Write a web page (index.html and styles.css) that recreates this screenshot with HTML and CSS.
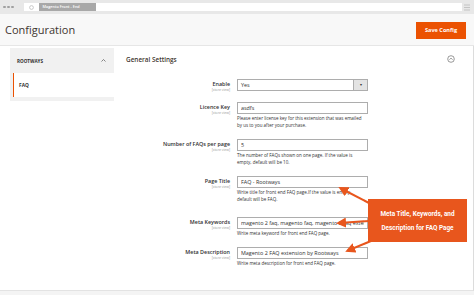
FILE: index.html
```html
<!DOCTYPE html>
<html lang="en">
<head>
    <meta charset="UTF-8">
    <title>Configuration</title>
    <link rel="stylesheet" href="styles.css">
</head>
<body>
    <div class="browser-bar">
        <span class="dots"><i></i><i></i><i></i></span>
        <span class="reload"><svg width="5" height="5" viewBox="0 0 10 10"><circle cx="5" cy="5" r="3.8" fill="none" stroke="#b5b5b5" stroke-width="1.4"/></svg></span>
        <span class="tab">Magento Front - End</span>
        <span class="address"></span>
        <span class="menu"><svg width="6" height="7" viewBox="0 0 6 7"><path d="M0 1h6M0 3.5h6M0 6h6" stroke="#c4c4c4" stroke-width="1"/></svg></span>
    </div>

    <header class="page-header">
        <h1>Configuration</h1>
        <button class="save-btn">Save Config</button>
    </header>

    <main class="layout">
        <aside class="sidebar">
            <div class="sidebar-head">
                <span>ROOTWAYS</span>
                <svg width="5" height="3" viewBox="0 0 10 6"><path d="M1 5l4-4 4 4" fill="none" stroke="#555" stroke-width="1.4"/></svg>
            </div>
            <div class="sidebar-item">FAQ</div>
        </aside>

        <section class="content">
            <div class="section-head">
                <h2>General Settings</h2>
                <svg width="8" height="8" viewBox="0 0 16 16"><circle cx="8" cy="8" r="6.6" fill="none" stroke="#555" stroke-width="1.2"/><path d="M5 9.3l3-3 3 3" fill="none" stroke="#555" stroke-width="1.3"/></svg>
            </div>

            <div class="form">
                <div class="row">
                    <div class="label">Enable<small>[store view]</small></div>
                    <div class="field">
                        <div class="input select">Yes<span class="select-btn">▾</span></div>
                    </div>
                </div>
                <div class="row">
                    <div class="label">Licence Key<small>[store view]</small></div>
                    <div class="field">
                        <input class="input" type="text" value="asdfs">
                        <p class="note">Please enter license key for this extension that was emailed by us to you after your purchase.</p>
                    </div>
                </div>
                <div class="row">
                    <div class="label">Number of FAQs per page<small>[store view]</small></div>
                    <div class="field">
                        <input class="input" type="text" value="5">
                        <p class="note">The number of FAQs shown on one page. If the value is empty, default will be 10.</p>
                    </div>
                </div>
                <div class="row">
                    <div class="label">Page Title<small>[store view]</small></div>
                    <div class="field">
                        <input class="input" type="text" value="FAQ - Rootways">
                        <p class="note">Write title for front end FAQ page.If the value is empty default will be FAQ.</p>
                    </div>
                </div>
                <div class="row row-spaced">
                    <div class="label">Meta Keywords<small>[store view]</small></div>
                    <div class="field">
                        <input class="input" type="text" value="magento 2 faq, magento faq, magento 2 faq extension">
                        <p class="note">Write meta keyword for front end FAQ page.</p>
                    </div>
                </div>
                <div class="row">
                    <div class="label">Meta Description<small>[store view]</small></div>
                    <div class="field">
                        <input class="input" type="text" value="Magento 2 FAQ extension by Rootways">
                        <p class="note">Write meta description for front end FAQ page.</p>
                    </div>
                </div>
            </div>
        </section>
    </main>

    <div class="callout">Meta Title, Keywords, and<br>Description for FAQ Page</div>

    <svg class="arrows" width="474" height="295" viewBox="0 0 474 295">
        <defs>
            <marker id="head" markerWidth="5" markerHeight="5" refX="3.5" refY="2.5" orient="auto" markerUnits="strokeWidth">
                <path d="M0 0L5 2.5L0 5z" fill="#e8561d"/>
            </marker>
        </defs>
        <g stroke="#e8561d" stroke-width="2" fill="none" marker-end="url(#head)">
            <path d="M369 203L341 188.5"/>
            <path d="M369 221L339 223"/>
            <path d="M371 241L348 250.5"/>
        </g>
    </svg>
</body>
</html>
```

FILE: styles.css
```css
body {
    margin: 0;
    width: 474px;
    height: 295px;
    overflow: hidden;
    background: #f4f4f4;
    font-family: 'Open Sans', sans-serif;
    color: #303030;
    position: relative;
}
.browser-bar {
    display: flex;
    align-items: center;
    height: 14px;
    background: #e8e8e8;
    padding: 0 4px 0 3px;
}
.dots {
    display: flex;
    gap: 1.5px;
}
.dots i {
    width: 2.5px;
    height: 2.5px;
    border-radius: 50%;
    background: #a0a0a0;
}
.reload {
    display: flex;
    align-items: center;
    justify-content: center;
    width: 15px;
    height: 8px;
    margin-left: 10px;
    background: #fff;
}
.tab {
    width: 53px;
    height: 8px;
    padding-left: 4px;
    background: #a8a8a8;
    color: #fff;
    font-size: 3.8px;
    font-weight: 600;
    line-height: 8px;
    white-space: nowrap;
}
.address {
    flex: 1;
    height: 8px;
    background: #fff;
}
.menu {
    display: flex;
    margin-left: 2px;
}
.page-header {
    display: flex;
    align-items: center;
    justify-content: space-between;
    height: 31px;
    padding: 0 8px 0 5px;
    background: #f8f8f8;
    border-bottom: 1px solid #e6e6e6;
}
h1 {
    margin: 0;
    font-size: 11px;
    font-weight: 400;
    color: #41362f;
}
.save-btn {
    width: 50px;
    height: 17px;
    padding: 0;
    border: none;
    background: #eb5202;
    color: #fff;
    font-family: 'Open Sans', sans-serif;
    font-size: 5.6px;
    font-weight: 700;
    margin-top: 1px;
}
.layout {
    display: flex;
    height: 244px;
    background: #fff;
    border-bottom: 1px solid #e3e3e3;
    border-right: 1px solid #dcdcdc;
}
.sidebar {
    align-self: flex-start;
    width: 104px;
    margin: 2px 0 0 10px;
    padding-bottom: 4px;
    background: #f1f1f1;
}
.sidebar-head {
    display: flex;
    align-items: center;
    justify-content: space-between;
    height: 25px;
    padding: 0 8px 0 7px;
    font-size: 4.6px;
    font-weight: 700;
    color: #303030;
}
.sidebar-item {
    height: 24px;
    margin-left: 3px;
    padding-left: 5px;
    border-left: 1.5px solid #eb5202;
    background: #fff;
    font-size: 4.8px;
    font-weight: 700;
    line-height: 24px;
}
.content {
    width: 329px;
    margin-left: 12px;
}
.section-head {
    display: flex;
    align-items: center;
    justify-content: space-between;
    height: 12px;
    margin-top: 7px;
}
h2 {
    margin: 0;
    font-size: 6.4px;
    font-weight: 600;
    color: #41362f;
}
.form {
    display: flex;
    flex-direction: column;
    gap: 10px;
    margin-top: 14px;
}
.row {
    display: grid;
    grid-template-columns: 104px 131px;
    column-gap: 7px;
}
.row-spaced {
    margin-top: 4px;
}
.label {
    display: flex;
    flex-direction: column;
    align-items: flex-end;
    padding-top: 2px;
    font-size: 5.4px;
    font-weight: 600;
    line-height: 7px;
    white-space: nowrap;
}
.label small {
    font-size: 3.4px;
    font-weight: 400;
    line-height: 4px;
    color: #999;
}
.input {
    display: block;
    position: relative;
    width: 100%;
    height: 12px;
    box-sizing: border-box;
    margin: 0;
    padding: 0 3px;
    border: 1px solid #adadad;
    border-radius: 0;
    background: #fff;
    font-family: 'Open Sans', sans-serif;
    font-size: 5.4px;
    line-height: 10px;
    color: #303030;
    white-space: nowrap;
    overflow: hidden;
    outline: none;
}
.select-btn {
    position: absolute;
    top: 0;
    right: 0;
    width: 13px;
    height: 10px;
    border-left: 1px solid #adadad;
    background: #e3e3e3;
    font-size: 4px;
    text-align: center;
    color: #333;
}
.note {
    max-width: 128px;
    margin: 1px 0 0;
    font-size: 4.5px;
    line-height: 7px;
    color: #303030;
}
.callout {
    position: absolute;
    left: 368px;
    top: 199px;
    width: 99px;
    height: 43px;
    display: flex;
    align-items: center;
    justify-content: center;
    text-align: center;
    background: #e8561d;
    color: #fff;
    font-family: 'Roboto', sans-serif;
    font-size: 6.4px;
    font-weight: 700;
    line-height: 14px;
}
.arrows {
    position: absolute;
    top: 0;
    left: 0;
    pointer-events: none;
}
```
